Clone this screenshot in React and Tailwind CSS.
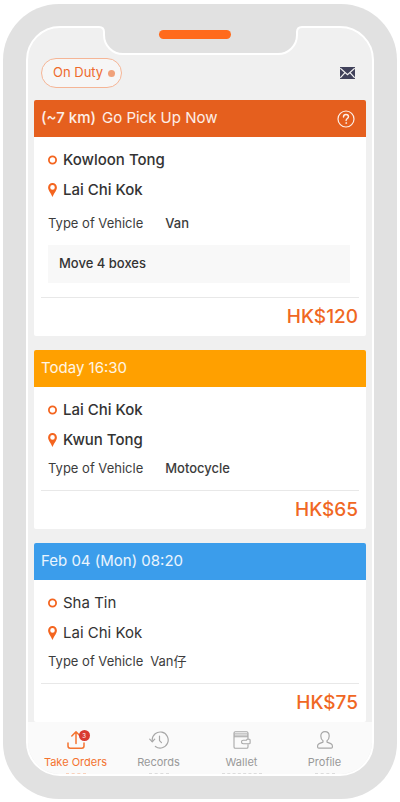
import { useState } from "react";
import clsx from "clsx";

const orders = [
  {
    id: 1,
    distance: "(~7 km)",
    title: "Go Pick Up Now",
    headerClass: "bg-[#e55f1e]",
    help: true,
    from: "Kowloon Tong",
    to: "Lai Chi Kok",
    placeClass: "font-medium",
    vehicle: "Van",
    vehicleClass: "font-medium",
    vehicleRow: "mt-[5px] gap-[22px]",
    note: "Move 4 boxes",
    price: "HK$120",
  },
  {
    id: 2,
    title: "Today 16:30",
    headerClass: "bg-[#ffa000]",
    from: "Lai Chi Kok",
    to: "Kwun Tong",
    placeClass: "font-medium",
    vehicle: "Motocycle",
    vehicleClass: "font-medium",
    vehicleRow: "gap-[22px]",
    price: "HK$65",
  },
  {
    id: 3,
    title: "Feb 04 (Mon) 08:20",
    headerClass: "bg-[#3b9deb]",
    from: "Sha Tin",
    to: "Lai Chi Kok",
    placeClass: "font-normal",
    vehicle: "Van仔",
    vehicleClass: "font-normal",
    vehicleRow: "gap-[7px]",
    price: "HK$75",
  },
];

const UploadIcon = () => (
  <svg width="20" height="20" viewBox="0 0 20 20" fill="none" stroke="currentColor" strokeWidth="1.500" strokeLinecap="round" strokeLinejoin="round">
    <path d="M10 13.500V2M5.800 6L10 1.800 14.200 6" />
    <path d="M2 13v3c0 1.500.7 2.200 2.200 2.200h11.600c1.500 0 2.200-.7 2.200-2.200v-3" />
  </svg>
);

const HistoryIcon = () => (
  <svg width="20" height="20" viewBox="0 0 20 20" fill="none" stroke="#a8a8a8" strokeWidth="1.200" strokeLinecap="round" strokeLinejoin="round">
    <path d="M3.200 11.500V10a8 8 0 1 1 3.200 6.400" />
    <path d="M.7 9.200l2.600 2.600 2.400-2.600" />
    <path d="M10.500 6v4.600l2 2" />
  </svg>
);

const WalletIcon = () => (
  <svg width="20" height="20" viewBox="0 0 20 20" fill="none" stroke="#a8a8a8" strokeWidth="1.100" strokeLinejoin="round">
    <path d="M16 9V3c0-.8-.5-1.300-1.300-1.300H3.300C2.500 1.700 2 2.200 2 3v14c0 .8.5 1.300 1.300 1.300h11.400c.8 0 1.300-.5 1.300-1.300v-2.800" />
    <path d="M2.500 3.500h13v2.500h-13z" fill="#a8a8a8" fillOpacity=".4" strokeWidth=".5" />
    <path d="M2 6.800h14" />
    <path d="M15 9.300h2.300c.5 0 .8.300.8.800v2.800c0 .5-.3.800-.8.800h-6.100a1.700 1.700 0 0 1 0-3.400h3.300z" />
  </svg>
);

const ProfileIcon = () => (
  <svg width="20" height="20" viewBox="0 0 20 20" fill="none" stroke="#a8a8a8" strokeWidth="1.200" strokeLinejoin="round">
    <path d="M10 1.700c-2.600 0-4.200 1.800-4.200 4.300 0 2 .9 3.900 2.200 4.800v1.300l-3.800 1.500C3 14.100 2.600 15 2.600 16v1c0 .8.4 1.200 1.200 1.200h12.400c.8 0 1.200-.4 1.200-1.200v-1c0-1-.4-1.900-1.600-2.400L12 12.100v-1.300c1.300-.9 2.200-2.800 2.200-4.800 0-2.500-1.600-4.300-4.200-4.300z" />
  </svg>
);

const tabs = [
  { name: "Take Orders", Icon: UploadIcon, badge: 3, underline: "w-5" },
  { name: "Records", Icon: HistoryIcon, underline: "w-5" },
  { name: "Wallet", Icon: WalletIcon, underline: "w-10" },
  { name: "Profile", Icon: ProfileIcon, underline: "w-5" },
];

const Notch = () => (
  <div className="absolute inset-x-0 top-[22px] flex justify-center">
    <svg width="204" height="34" viewBox="0 0 204 34" fill="none">
      <path
        d="M0 1H1q5 0 5 5v3a19 19 0 0 0 19 19H180a19 19 0 0 0 19-19V6q0-5 5-5V-2H0z"
        fill="#e1e1e1"
      />
      <path d="M0 1H1q5 0 5 5v3a19 19 0 0 0 19 19H180a19 19 0 0 0 19-19V6q0-5 5-5" stroke="#fff" strokeWidth="2" />
      <rect x="61" y="4" width="72" height="9" rx="4.500" fill="#ff6a1c" />
    </svg>
  </div>
);

const Place = ({ children, pin, className }) => (
  <div className="flex h-[30px] items-center gap-1.5">
    <svg width="9" height="14" viewBox="0 0 9 14" className="shrink-0">
      {pin ? (
        <path
          fillRule="evenodd"
          fill="#f4651f"
          d="M4.500 0A4.400 4.400 0 0 0 .1 4.400C.1 7.200 2.600 9.500 4.500 14 6.400 9.500 8.900 7.200 8.900 4.400A4.400 4.400 0 0 0 4.500 0zm0 2.100a2.300 2.300 0 1 1 0 4.600 2.300 2.300 0 0 1 0-4.600z"
        />
      ) : (
        <circle cx="4.500" cy="7" r="3.600" fill="none" stroke="#f4651f" strokeWidth="1.800" />
      )}
    </svg>
    <span className={clsx("text-[15px] text-[#333]", className)}>{children}</span>
  </div>
);

const OrderCard = ({ order }) => (
  <article className="shrink-0 overflow-hidden rounded-xs bg-white">
    <header className={clsx("flex h-[37px] items-center justify-between px-[7px] text-[15px] text-white/90", order.headerClass)}>
      <h2>
        {order.distance && <span className="mr-1.5 font-medium">{order.distance}</span>}
        {order.title}
      </h2>
      {order.help && (
        <button type="button" aria-label="Help" className="mr-1 cursor-pointer">
          <svg width="18" height="18" viewBox="0 0 18 18" fill="none" stroke="currentColor" strokeLinecap="round">
            <circle cx="9" cy="9" r="8" strokeWidth="1.200" />
            <path d="M6.500 7c0-1.600 1.100-2.500 2.500-2.500s2.500.9 2.500 2.200c0 1.800-2.400 1.900-2.400 3.900" strokeWidth="1.400" />
            <circle cx="9.100" cy="13" r=".5" fill="currentColor" strokeWidth=".6" />
          </svg>
        </button>
      )}
    </header>

    <div className="pt-2 pr-4 pb-[7px] pl-3.5">
      <Place className={order.placeClass}>{order.from}</Place>
      <Place pin className={order.placeClass}>{order.to}</Place>
      <div className={clsx("flex h-7 items-center text-[13px] text-[#3c3c3c]", order.vehicleRow)}>
        <span>Type of Vehicle</span>
        <span className={order.vehicleClass}>{order.vehicle}</span>
      </div>
      {order.note && (
        <p className="my-[7px] flex h-[38px] items-center bg-[#f8f8f8] px-[11px] text-[13px] font-medium text-[#333]">
          {order.note}
        </p>
      )}
    </div>

    <div className="mx-[7px] flex h-[39px] items-center justify-end border-t border-[#e8e8e8] pr-px text-[19px] font-medium text-[#f06723]">
      {order.price}
    </div>
  </article>
);

const App = () => {
  const [onDuty, setOnDuty] = useState(true);
  const [activeTab, setActiveTab] = useState("Take Orders");

  return (
    <div className="h-screen bg-white px-[3px] pt-1 pb-[3px] font-['Inter','Noto_Sans_CJK_TC',sans-serif]">
      <div className="relative flex h-full flex-col rounded-[56px] bg-[#e1e1e1] p-[23px] pt-[22px]">
        <div className="flex min-h-0 flex-1 flex-col overflow-hidden rounded-[34px] border-2 border-white bg-[#f0f0f0]">
          {/* Top bar */}
          <div className="flex items-center justify-between px-[13px] pt-[30px] pb-3">
            <button
              type="button"
              onClick={() => setOnDuty(!onDuty)}
              className="flex h-[30px] cursor-pointer items-center gap-[5px] rounded-full border border-[#f5b596] bg-[#f6f6f6] pr-1.5 pl-[11px] text-[13px] text-[#ee6a2c]"
            >
              {onDuty ? "On Duty" : "Off Duty"}
              <span className="size-[7px] rounded-full bg-[#f0a17a]" />
            </button>
            <button type="button" aria-label="Messages" className="mr-1 cursor-pointer">
              <svg width="15" height="12" viewBox="0 0 15 12">
                <rect width="15" height="12" fill="#40415a" />
                <path d="M.3 1.200L7.500 7.600l7.200-6.400M.3 10.800l4.500-5M14.700 10.800l-4.500-5" fill="none" stroke="#f0f0f0" strokeWidth="1.200" />
              </svg>
            </button>
          </div>

          {/* Orders */}
          <main className="flex min-h-0 flex-1 flex-col gap-[14px] overflow-hidden px-1.5">
            {orders.map((order) => (
              <OrderCard key={order.id} order={order} />
            ))}
          </main>

          {/* Tab bar */}
          <nav className="grid h-[52px] shrink-0 grid-cols-4 bg-[#fafafa] px-1.5">
            {tabs.map(({ name, Icon, badge, underline }) => (
              <button
                key={name}
                type="button"
                onClick={() => setActiveTab(name)}
                className={clsx(
                  "flex cursor-pointer flex-col items-center pt-2 text-[11px] leading-4 whitespace-nowrap",
                  activeTab === name ? "text-[#f4732f]" : "text-[#999]"
                )}
              >
                <span className="relative mb-1">
                  <Icon />
                  {badge && (
                    <span className="absolute top-0 -right-1 flex size-[11px] items-center justify-center rounded-full bg-[#d93a30] text-[6px] leading-none text-white">
                      {badge}
                    </span>
                  )}
                </span>
                {name}
                <span className={clsx("mt-[3px] border-t border-dashed border-current opacity-30", underline)} />
              </button>
            ))}
          </nav>
        </div>
        <Notch />
      </div>
    </div>
  );
};

export default App;
